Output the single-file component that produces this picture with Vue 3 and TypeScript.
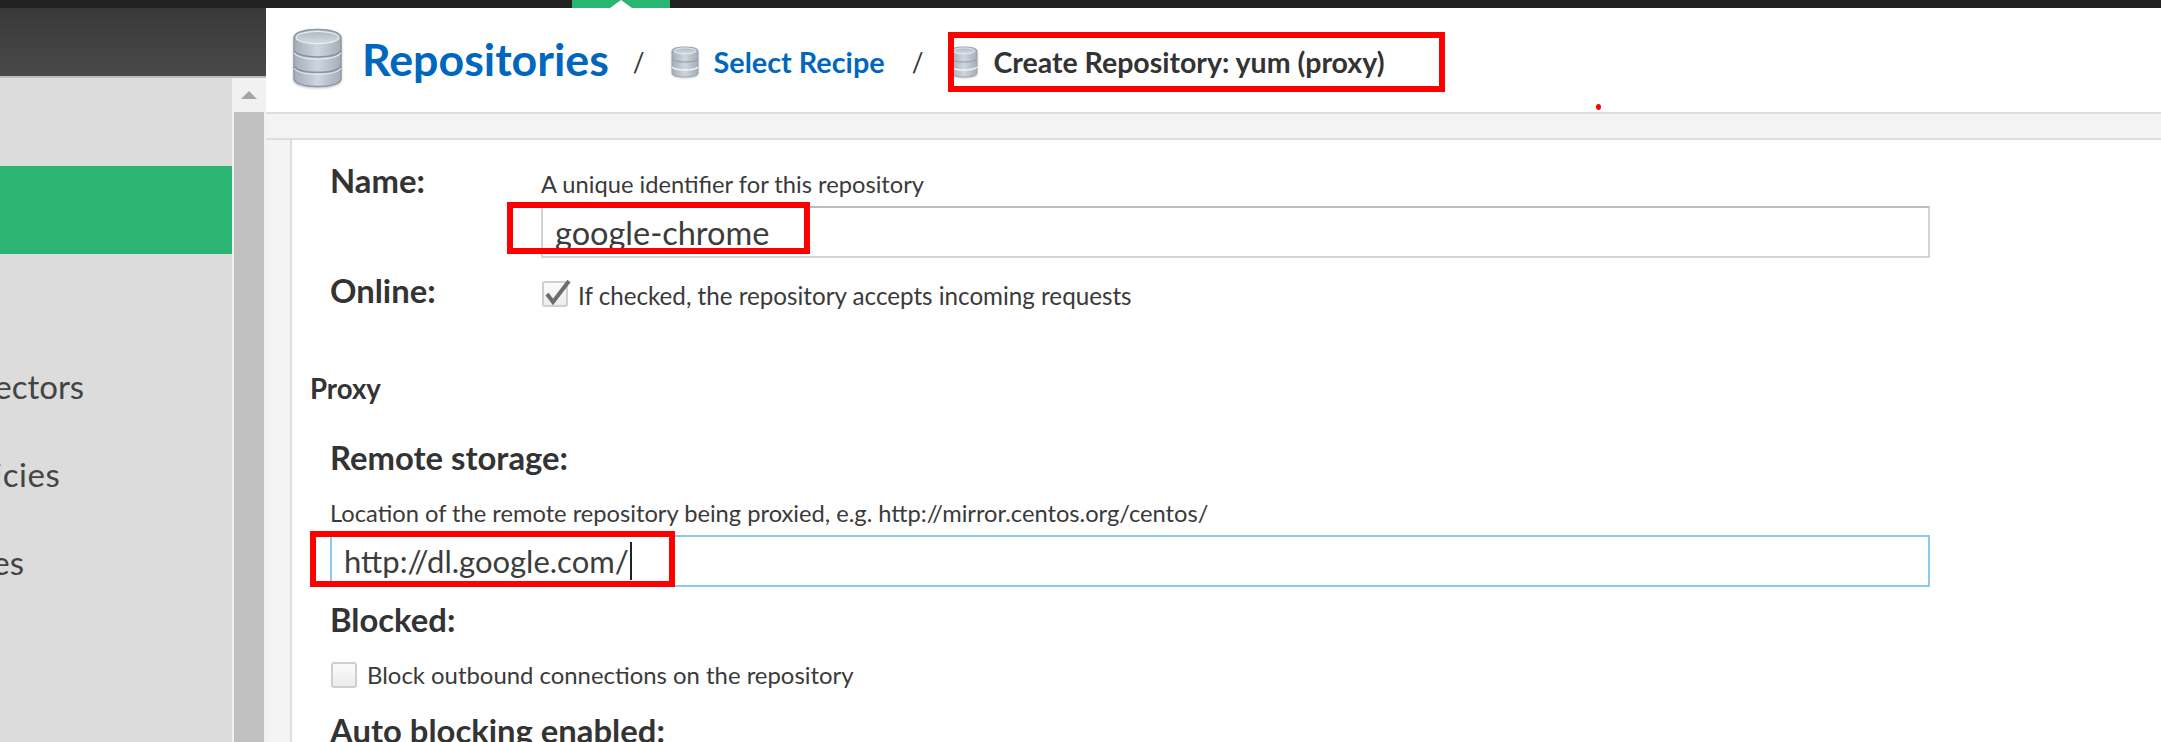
<script setup lang="ts">
const navItems: string[] = ['Content Selectors', 'Cleanup Policies', 'Routing Rules'];
</script>

<template>
  <div class="page">
    <svg class="defs" width="0" height="0" aria-hidden="true">
      <defs>
        <linearGradient id="band" x1="0" x2="1" y1="0" y2="0">
          <stop offset="0" stop-color="#a4aeb9" />
          <stop offset="0.5" stop-color="#ced6de" />
          <stop offset="1" stop-color="#a4aeb9" />
        </linearGradient>
        <linearGradient id="lid" x1="0" x2="0" y1="0" y2="1">
          <stop offset="0" stop-color="#aeb8c2" />
          <stop offset="1" stop-color="#d6dce3" />
        </linearGradient>
        <symbol id="db-large" viewBox="0 0 50 58">
          <path d="M2 9c0-5 10-8 23-8s23 3 23 8v40c0 5-10 8-23 8S2 54 2 49z" fill="url(#band)" stroke="#8f99a3" stroke-width="1.5" />
          <ellipse cx="25" cy="9" rx="21" ry="6" fill="url(#lid)" stroke="#eef1f4" stroke-width="1" />
          <path d="M2 22c3 4 12 6 23 6s20-2 23-6" fill="none" stroke="#8a949e" stroke-width="1.6" />
          <path d="M2 24c3 4 12 6 23 6s20-2 23-6" fill="none" stroke="#e6eaee" stroke-width="1" />
          <path d="M2 37c3 4 12 6 23 6s20-2 23-6" fill="none" stroke="#8a949e" stroke-width="1.6" />
          <path d="M2 39c3 4 12 6 23 6s20-2 23-6" fill="none" stroke="#e6eaee" stroke-width="1" />
        </symbol>
        <symbol id="db-small" viewBox="0 0 28 32">
          <path d="M1 5c0-3 6-4 13-4s13 1 13 4v22c0 3-6 4-13 4S1 30 1 27z" fill="url(#band)" stroke="#98a2ac" stroke-width="1" />
          <ellipse cx="14" cy="5" rx="11" ry="3" fill="url(#lid)" stroke="#eef1f4" stroke-width="0.7" />
          <path d="M1 13c2 2 7 3 13 3s11-1 13-3" fill="none" stroke="#8f99a3" stroke-width="1" />
          <path d="M1 21c2 2 7 3 13 3s11-1 13-3" fill="none" stroke="#f0f2f5" stroke-width="1.4" />
        </symbol>
      </defs>
    </svg>

    <div class="topbar">
      <div class="top-tab"><span class="notch"></span></div>
    </div>

    <div class="layout">
      <aside class="sidebar">
        <div class="side-head"></div>
        <div class="side-body">
          <nav class="nav">
            <div class="nav-active"></div>
            <div v-for="item in navItems" :key="item" class="nav-item">{{ item }}</div>
          </nav>
          <div class="scrollbar">
            <div class="scroll-up"><span class="arrow"></span></div>
            <div class="scroll-thumb"></div>
          </div>
        </div>
      </aside>

      <main class="main">
        <header class="crumbs">
          <svg class="icon-large"><use href="#db-large" /></svg>
          <h1 class="title">Repositories</h1>
          <span class="sep sep-first">/</span>
          <svg class="icon-small"><use href="#db-small" /></svg>
          <a class="crumb-link">Select Recipe</a>
          <span class="sep sep-second">/</span>
          <svg class="icon-small"><use href="#db-small" /></svg>
          <span class="crumb-current">Create Repository: yum (proxy)</span>
        </header>

        <div class="band"></div>

        <div class="content">
          <section class="panel">
            <div class="name-grid">
              <label class="label">Name:</label>
              <div class="hint hint-top">A unique identifier for this repository</div>
              <div class="input name-input">google-chrome</div>
              <label class="label online-label">Online:</label>
              <div class="check-row online-row">
                <span class="checkbox">
                  <svg class="tick" viewBox="0 0 28 28"><path d="M4 15l6 8L26 2" fill="none" stroke="#6d6d6d" stroke-width="4" /></svg>
                </span>
                <span class="hint">If checked, the repository accepts incoming requests</span>
              </div>
            </div>

            <h2 class="section">Proxy</h2>

            <div class="fields">
              <label class="label remote-label">Remote storage:</label>
              <div class="hint location">Location of the remote repository being proxied, e.g. http://mirror.centos.org/centos/</div>
              <div class="input url-input">http://dl.google.com/<span class="caret"></span></div>
              <label class="label blocked-label">Blocked:</label>
              <div class="check-row blocked-row">
                <span class="checkbox"></span>
                <span class="hint">Block outbound connections on the repository</span>
              </div>
              <label class="label auto-label">Auto blocking enabled:</label>
            </div>
          </section>
        </div>
      </main>
    </div>

    <!-- red annotations drawn on top of the screenshot -->
    <div class="mark mark-crumb"></div>
    <div class="mark mark-name"></div>
    <div class="mark mark-url"></div>
    <div class="dot"></div>
  </div>
</template>

<style>
html,
body {
  margin: 0;
  background: #fff;
}
</style>

<style scoped>
.page {
  position: relative;
  width: 2161px;
  height: 742px;
  overflow: hidden;
  font-family: Lato, "Liberation Sans", sans-serif;
  color: #333;
  background: #fff;
}

.defs {
  position: absolute;
}

.topbar {
  height: 8px;
  background: #222;
}

.top-tab {
  position: relative;
  width: 98px;
  height: 8px;
  margin-left: 572px;
  background: #2bb573;
}

.notch {
  position: absolute;
  left: 38px;
  top: 0;
  border-left: 11px solid transparent;
  border-right: 11px solid transparent;
  border-bottom: 8px solid #fff;
}

.layout {
  display: flex;
  height: 734px;
}

.sidebar {
  width: 266px;
  flex: none;
  display: flex;
  flex-direction: column;
}

.side-head {
  height: 68px;
  background: linear-gradient(#393939, #494949);
  border-bottom: 2px solid #bdbdbd;
}

.side-body {
  flex: 1;
  display: flex;
}

.nav {
  width: 232px;
  background: #dcdcdc;
  overflow: hidden;
  padding-top: 88px;
}

.nav-active {
  height: 88px;
  background: #2bb573;
}

.nav-item {
  height: 88px;
  line-height: 88px;
  margin-left: -175px;
  font-size: 33px;
  color: #444;
  white-space: nowrap;
}

.nav-item:nth-child(3) {
  margin-left: -184px;
  letter-spacing: 0.5px;
}

.nav-active + .nav-item {
  margin-top: 88px;
}

.scrollbar {
  width: 34px;
  background: #f1f1f1;
}

.scroll-up {
  height: 34px;
  display: flex;
  align-items: center;
  justify-content: center;
}

.arrow {
  border-left: 8px solid transparent;
  border-right: 8px solid transparent;
  border-bottom: 8px solid #a6a6a6;
}

.scroll-thumb {
  height: 630px;
  margin: 0 2px;
  background: #c0c0c0;
}

.main {
  flex: 1;
  display: flex;
  flex-direction: column;
  min-width: 0;
}

.crumbs {
  height: 104px;
  flex: none;
  display: flex;
  align-items: center;
  padding-left: 26px;
  box-sizing: border-box;
}

.icon-large {
  width: 51px;
  height: 60px;
  flex: none;
  margin-bottom: 4px;
  filter: drop-shadow(0 1px 1px rgba(0, 0, 0, 0.25));
}

.icon-small {
  width: 28px;
  height: 32px;
  flex: none;
  margin-top: 4px;
  filter: drop-shadow(0 1px 1px rgba(0, 0, 0, 0.15));
}

.title {
  margin: 0 24px 2px 19px;
  font-size: 44.7px;
  font-weight: 700;
  color: #0067c0;
}

.sep {
  margin-top: 4px;
  font-size: 26px;
  color: #333;
}

.sep-first {
  margin-right: 26px;
}

.sep-second {
  margin-left: 27px;
  margin-right: 27px;
}

.crumb-link {
  margin-top: 4px;
  margin-left: 15px;
  font-size: 28.8px;
  font-weight: 700;
  color: #0067c0;
}

.crumb-current {
  margin-top: 4px;
  margin-left: 15px;
  font-size: 28.5px;
  font-weight: 700;
  color: #333;
}

.band {
  height: 24px;
  flex: none;
  background: #f3f3f3;
  border-top: 2px solid #ddd;
  border-bottom: 2px solid #ddd;
}

.content {
  flex: 1;
  padding-left: 24px;
  background: #f3f3f3;
  min-height: 0;
}

.panel {
  height: 100%;
  padding-left: 18px;
  border-left: 2px solid #ddd;
  background: #fff;
}

.name-grid {
  display: grid;
  grid-template-columns: 211px 1389px;
  grid-template-rows: 30px auto auto;
  margin-left: 20px;
  padding-top: 26px;
}

.label {
  display: block;
  height: 30px;
  line-height: 30px;
  font-size: 32.8px;
  font-weight: 700;
  color: #333;
  white-space: nowrap;
}

.hint {
  font-size: 23.7px;
  line-height: 30px;
  color: #3a3a3a;
  white-space: nowrap;
}

.hint-top {
  margin-top: 3px;
}

.input {
  box-sizing: border-box;
  display: flex;
  align-items: center;
  height: 52px;
  padding-left: 12px;
  font-size: 31px;
  color: #3c3c3c;
  border: 2px solid #d4d4d4;
  border-top-color: #bcbcbc;
  background: #fff;
}

.name-input {
  grid-column: 2;
  margin-top: 10px;
  font-size: 32.5px;
}

.online-label {
  margin-top: 18px;
}

.check-row {
  display: flex;
  align-items: center;
}

.online-row {
  margin-top: 18px;
  margin-left: 1px;
}

.online-row .hint {
  padding-top: 5px;
  font-size: 24.2px;
}

.checkbox {
  position: relative;
  flex: none;
  box-sizing: border-box;
  width: 26px;
  height: 26px;
  margin-right: 10px;
  border: 2px solid #cfcfcf;
  border-radius: 3px;
  background: linear-gradient(#fbfbfb, #ececec);
}

.tick {
  position: absolute;
  left: -1px;
  top: -4px;
  width: 28px;
  height: 28px;
  overflow: visible;
}

.section {
  height: 30px;
  margin: 63px 0 0;
  line-height: 30px;
  font-size: 27.6px;
  font-weight: 700;
  color: #333;
}

.fields {
  margin-left: 20px;
  width: 1600px;
}

.remote-label {
  margin-top: 39px;
}

.location {
  margin-top: 25px;
}

.url-input {
  margin-top: 7px;
  border-color: #8cc8f0;
}

.caret {
  display: inline-block;
  width: 2px;
  height: 38px;
  margin-left: 1px;
  background: #222;
}

.blocked-label {
  margin-top: 18px;
}

.blocked-row {
  margin-top: 25px;
  margin-left: 1px;
}

.blocked-row .hint {
  font-size: 23.9px;
}

.auto-label {
  margin-top: 26px;
}

.mark {
  position: absolute;
  box-sizing: border-box;
  border: 6px solid #f00;
}

.mark-crumb {
  left: 948px;
  top: 32px;
  width: 497px;
  height: 60px;
}

.mark-name {
  left: 507px;
  top: 202px;
  width: 303px;
  height: 52px;
}

.mark-url {
  left: 310px;
  top: 531px;
  width: 365px;
  height: 56px;
}

.dot {
  position: absolute;
  left: 1596px;
  top: 104px;
  width: 5px;
  height: 6px;
  border-radius: 50%;
  background: #f00;
}
</style>
